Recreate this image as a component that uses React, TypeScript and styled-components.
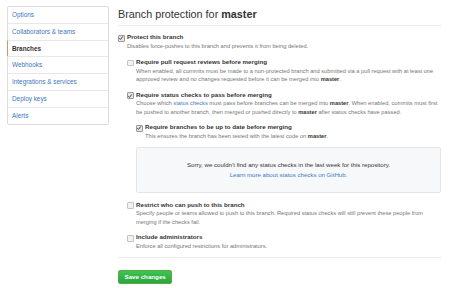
import React from "react";
import styled, { createGlobalStyle } from "styled-components";

const GlobalStyle = createGlobalStyle`
  body {
    margin: 0;
    background: #fff;
    font-family: "Liberation Sans", Arial, sans-serif;
    color: #333;
  }
`;

const Page = styled.div`
  display: flex;
  align-items: flex-start;
  gap: 9px;
  padding: 6px 33px 0 7px;
  width: 474px;
  box-sizing: border-box;
`;

const Menu = styled.nav`
  display: flex;
  flex-direction: column;
  width: 102px;
  flex-shrink: 0;
  border: 1px solid #dcdcdc;
  border-radius: 2px;
  box-sizing: border-box;
`;

const MenuItem = styled.a<{ $active?: boolean }>`
  display: block;
  height: 15.8px;
  line-height: 15.8px;
  padding: 0 4px;
  font-size: 6.4px;
  color: ${(p) => (p.$active ? "#333" : "#4078c0")};
  font-weight: ${(p) => (p.$active ? "bold" : "normal")};
  text-decoration: none;
  white-space: nowrap;

  & + & {
    border-top: 1px solid #e8e8e8;
  }

  ${(p) =>
    p.$active &&
    `
    margin-left: -1px;
    padding-left: 4px;
    border-left: 1px solid #d8956a;
  `}
`;

const Main = styled.main`
  flex: 1;
  min-width: 0;
`;

const Heading = styled.h2`
  margin: 0;
  font-size: 10.8px;
  line-height: 16px;
  font-weight: normal;
  color: #333;
  padding-bottom: 3px;
  border-bottom: 1px solid #eaeaea;
  margin-bottom: 7.3px;

  strong {
    font-weight: bold;
  }
`;

const Item = styled.div<{ $first?: boolean }>`
  display: grid;
  grid-template-columns: 9px 1fr;
  margin-top: ${(p) => (p.$first ? "0" : "7.55px")};
`;

const Box = styled.span<{ $checked?: boolean }>`
  display: block;
  width: 4.5px;
  height: 4.5px;
  margin-top: 1.8px;
  border: 0.6px solid ${(p) => (p.$checked ? "#9a9a9a" : "#c4c4c4")};
  border-radius: 1px;
  background: ${(p) => (p.$checked ? "#e4e4e4" : "#f2f2f2")};
  position: relative;

  svg {
    position: absolute;
    left: -0.6px;
    top: -0.8px;
  }
`;

const Body = styled.div`
  min-width: 0;
`;

const Label = styled.div`
  font-size: 6.2px;
  line-height: 8px;
  font-weight: bold;
  color: #333;
  white-space: nowrap;
`;

const Note = styled.p`
  margin: 0.7px 0 0;
  font-size: 5.7px;
  line-height: 8.3px;
  color: #767676;

  strong {
    color: #333;
  }
`;

const Link = styled.a`
  color: #4078c0;
  text-decoration: none;
`;

const Blank = styled.div`
  margin-top: 6.5px;
  height: 46px;
  box-sizing: border-box;
  padding: 12px 0;
  border: 1px solid #e5e5e5;
  border-radius: 2px;
  background: #f7f8fa;
  text-align: center;
  font-size: 6.1px;
  line-height: 10px;
  color: #333;
`;

const Footer = styled.div`
  margin-top: 6.3px;
  padding-top: 7px;
  border-top: 1px solid #eaeaea;
`;

const SaveButton = styled.button`
  height: 14px;
  padding: 0 5.5px;
  border: 1px solid #5ca941;
  border-radius: 2px;
  background: linear-gradient(#3ec453, #2aa63f);
  color: #fff;
  font-family: inherit;
  font-size: 6.2px;
  font-weight: bold;
  line-height: 12px;
  cursor: pointer;
`;

function Check({ checked }: { checked?: boolean }) {
  return (
    <Box $checked={checked}>
      {checked && (
        <svg width="6" height="6" viewBox="0 0 6 6">
          <path
            d="M1.3 3.2 L2.5 4.4 L4.8 1.4"
            fill="none"
            stroke="#333"
            strokeWidth="0.9"
          />
        </svg>
      )}
    </Box>
  );
}

type OptionProps = {
  label: string;
  checked?: boolean;
  first?: boolean;
  children?: React.ReactNode;
  note: React.ReactNode;
};

function Option({ label, checked, first, note, children }: OptionProps) {
  return (
    <Item $first={first}>
      <Check checked={checked} />
      <Body>
        <Label>{label}</Label>
        <Note>{note}</Note>
        {children}
      </Body>
    </Item>
  );
}

const menu = [
  "Options",
  "Collaborators & teams",
  "Branches",
  "Webhooks",
  "Integrations & services",
  "Deploy keys",
  "Alerts",
];

export default function App() {
  return (
    <>
      <GlobalStyle />
      <Page>
        <Menu>
          {menu.map((m) => (
            <MenuItem key={m} href="#" $active={m === "Branches"}>
              {m}
            </MenuItem>
          ))}
        </Menu>
        <Main>
          <Heading>
            Branch protection for <strong>master</strong>
          </Heading>
          <Option
            first
            checked
            label="Protect this branch"
            note="Disables force-pushes to this branch and prevents it from being deleted."
          >
            <Option
              label="Require pull request reviews before merging"
              note={
                <>
                  When enabled, all commits must be made to a non-protected
                  branch and submitted via a pull request with at least one
                  approved review and no changes requested before it can be
                  merged into <strong>master</strong>.
                </>
              }
            />
            <Option
              checked
              label="Require status checks to pass before merging"
              note={
                <>
                  Choose which <Link href="#">status checks</Link> must pass
                  before branches can be merged into <strong>master</strong>.
                  When enabled, commits must first be pushed to another branch,
                  then merged or pushed directly to <strong>master</strong>{" "}
                  after status checks have passed.
                </>
              }
            >
              <Option
                checked
                label="Require branches to be up to date before merging"
                note={
                  <>
                    This ensures the branch has been tested with the latest code
                    on <strong>master</strong>.
                  </>
                }
              />
              <Blank>
                Sorry, we couldn’t find any status checks in the last week for
                this repository.
                <br />
                <Link href="#">Learn more about status checks on GitHub.</Link>
              </Blank>
            </Option>
            <Option
              label="Restrict who can push to this branch"
              note="Specify people or teams allowed to push to this branch. Required status checks will still prevent these people from merging if the checks fail."
            />
            <Option
              label="Include administrators"
              note="Enforce all configured restrictions for administrators."
            />
          </Option>
          <Footer>
            <SaveButton type="button">Save changes</SaveButton>
          </Footer>
        </Main>
      </Page>
    </>
  );
}
